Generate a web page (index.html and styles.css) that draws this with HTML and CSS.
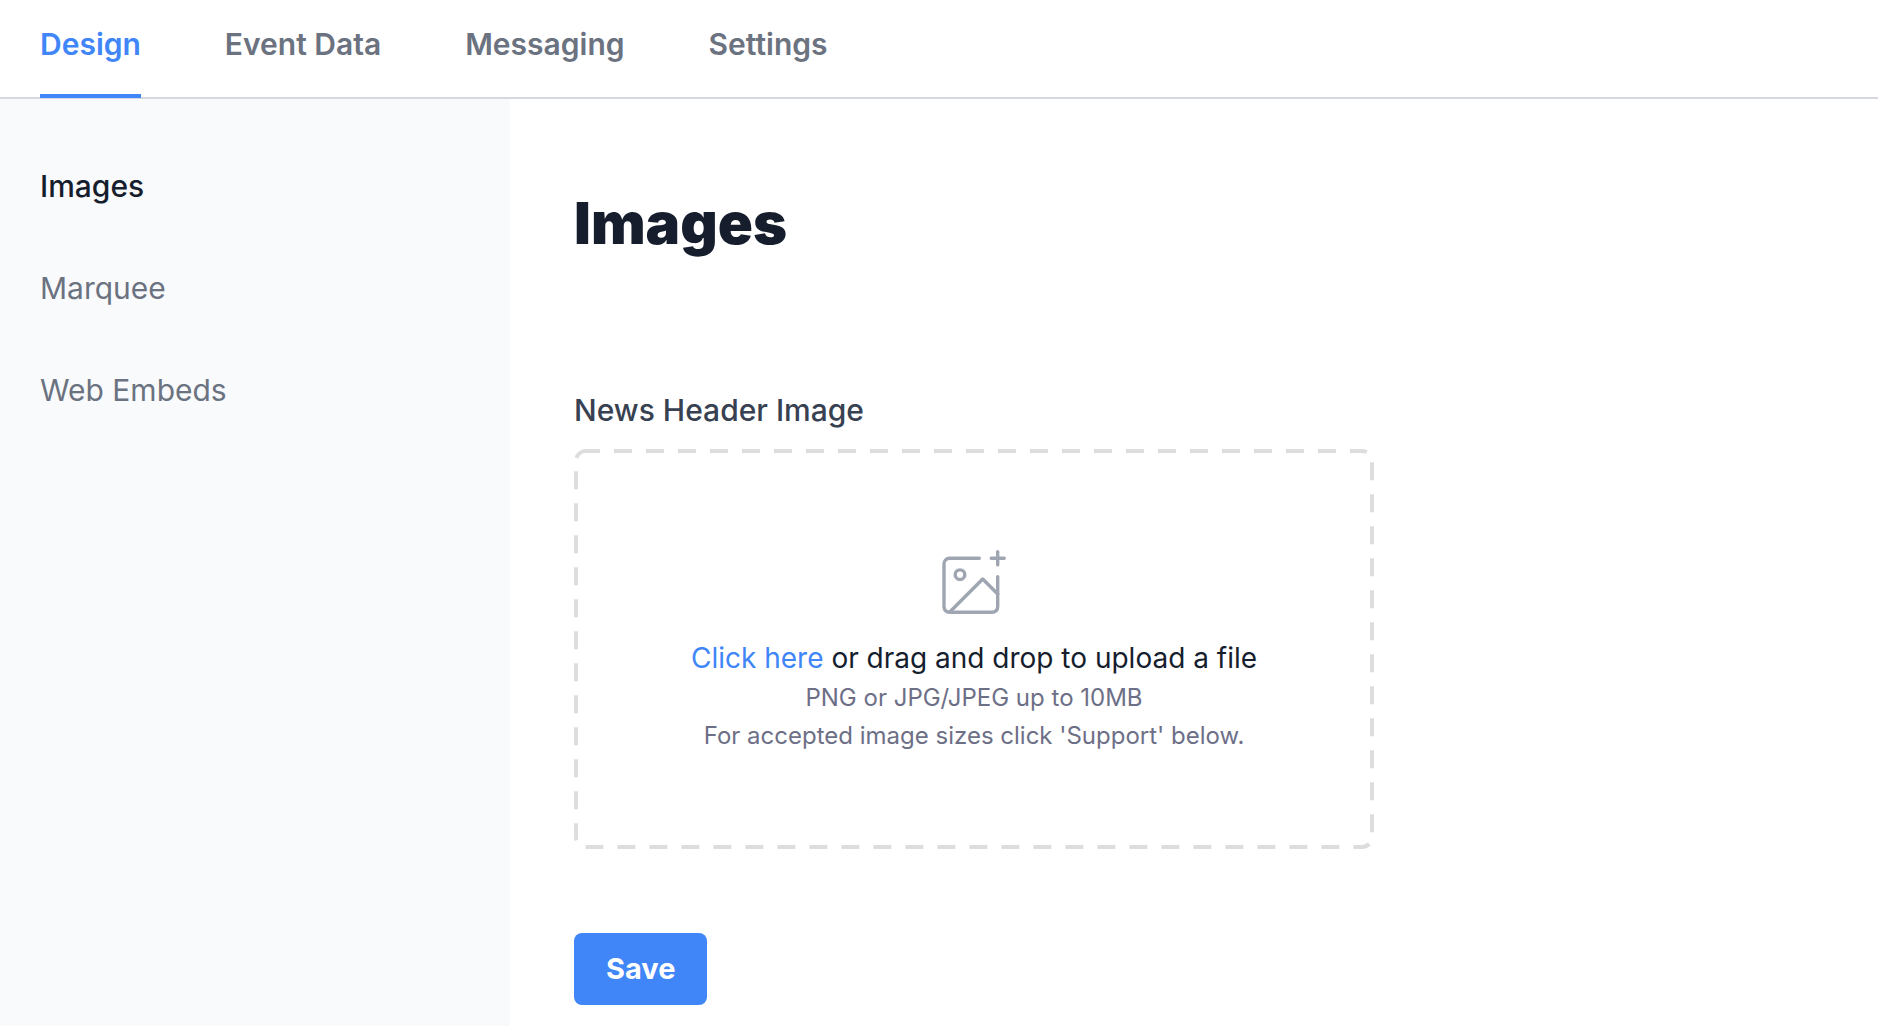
FILE: index.html
```html
<!DOCTYPE html>
<html lang="en">
<head>
  <meta charset="utf-8">
  <meta name="viewport" content="width=device-width, initial-scale=1">
  <title>Images</title>
  <link rel="stylesheet" href="styles.css">
</head>
<body>
  <nav class="tabs" aria-label="Sections">
    <a class="tab tab-active" href="#design" aria-current="page">Design</a>
    <a class="tab" href="#event-data">Event Data</a>
    <a class="tab" href="#messaging">Messaging</a>
    <a class="tab" href="#settings">Settings</a>
  </nav>
  <div class="layout">
    <nav class="sidebar" aria-label="Design">
      <a class="side-link side-link-active" href="#images" aria-current="page">Images</a>
      <a class="side-link" href="#marquee">Marquee</a>
      <a class="side-link" href="#web-embeds">Web Embeds</a>
    </nav>
    <main class="content">
      <h1 class="title">Images</h1>
      <form class="form">
        <label class="field-label" for="header-image">News Header Image</label>
        <div class="dropzone">
          <svg class="dropzone-outline" aria-hidden="true">
            <rect width="100%" height="100%" rx="12" ry="12" fill="none" stroke="#dddddd" stroke-width="8" stroke-dasharray="18 14" stroke-dashoffset="4"/>
          </svg>
          <input class="file-input" id="header-image" type="file" accept="image/png,image/jpeg">
          <svg class="upload-icon" viewBox="0 0 64 64" fill="none" stroke="currentColor" stroke-width="3.4" stroke-linecap="round" stroke-linejoin="round" aria-hidden="true">
            <path d="M37.3 8.3H7.5a5.5 5.5 0 0 0-5.5 5.5v43a5.5 5.5 0 0 0 5.5 5.5h42.7a5.5 5.5 0 0 0 5.5-5.5V26.7"/>
            <path d="M8 61.7L40.7 29l15 15"/>
            <circle cx="18" cy="24.7" r="4.8"/>
            <path d="M55.7 1.7v13.2M49.2 8.3h13"/>
          </svg>
          <p class="prompt"><label class="browse" for="header-image">Click here</label> or drag and drop to upload a file</p>
          <p class="hint">PNG or JPG/JPEG up to 10MB</p>
          <p class="hint">For accepted image sizes click 'Support' below.</p>
        </div>
        <button class="save" type="submit">Save</button>
      </form>
    </main>
  </div>
</body>
</html>
```
FILE: styles.css
```css
* {
  box-sizing: border-box;
}

body {
  margin: 0;
  min-height: 100vh;
  display: flex;
  flex-direction: column;
  background: #ffffff;
  color: #161e2e;
  font-family: Inter, "Liberation Sans", sans-serif;
  font-size: 30px;
  line-height: 48px;
}

h1,
p {
  margin: 0;
}

a {
  color: inherit;
  text-decoration: none;
}

.tabs {
  display: flex;
  gap: 84px;
  padding: 20px 40px 0;
  border-bottom: 2px solid #d5d8e2;
}

.tab {
  margin-bottom: -1px;
  padding-bottom: 26px;
  border-bottom: 4px solid transparent;
  color: #6b7280;
  font-weight: 600;
}

.tab-active {
  border-color: #4086f8;
  color: #4086f8;
}

.layout {
  flex: 1;
  display: flex;
}

.sidebar {
  flex: 0 0 510px;
  display: flex;
  flex-direction: column;
  gap: 54px;
  padding: 63px 40px;
  background: #f9fafc;
  color: #6b7280;
}

.side-link-active {
  color: #161e2e;
  font-weight: 500;
}

.content {
  flex: 1;
  padding: 88px 64px 20px;
}

.title {
  font-size: 58px;
  font-weight: 900;
  line-height: 72px;
}

.form {
  display: flex;
  flex-direction: column;
  align-items: flex-start;
  max-width: 800px;
  margin-top: 127px;
}

.field-label {
  color: #374151;
  font-weight: 500;
}

.dropzone {
  position: relative;
  display: flex;
  flex-direction: column;
  align-items: center;
  width: 100%;
  min-height: 400px;
  margin-top: 15px;
  padding: 101px 24px 24px;
  border-radius: 12px;
  overflow: hidden;
  text-align: center;
}

.dropzone-outline {
  position: absolute;
  inset: 0;
  width: 100%;
  height: 100%;
  pointer-events: none;
}

.file-input {
  position: absolute;
  width: 1px;
  height: 1px;
  opacity: 0;
}

.upload-icon {
  width: 64px;
  height: 64px;
  color: #9fa6b2;
}

.prompt {
  margin-top: 24px;
  margin-bottom: 1px;
  font-size: 28px;
  line-height: 40px;
}

.browse {
  color: #4086f8;
  cursor: pointer;
}

.hint {
  color: #6d6f87;
  font-size: 24px;
  line-height: 38px;
}

.save {
  margin-top: 84px;
  padding: 12px 32px;
  border: 0;
  border-radius: 8px;
  background: #4086f8;
  color: #ffffff;
  font: inherit;
  font-size: 29px;
  font-weight: 700;
  cursor: pointer;
}
```
